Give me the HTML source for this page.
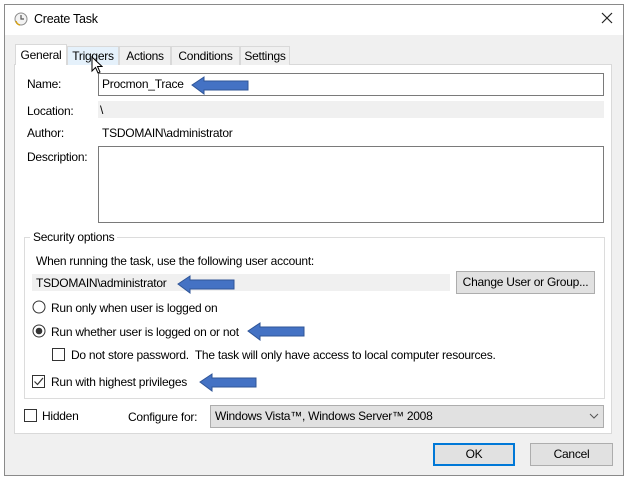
<!DOCTYPE html>
<html><head><meta charset="utf-8"><style>
*{box-sizing:border-box;margin:0;padding:0}
body{width:627px;height:477px;background:#fff;position:relative;overflow:hidden;font-family:"Liberation Sans",sans-serif;font-size:12px;color:#000;letter-spacing:-0.25px}
.a{position:absolute}
.win{left:4px;top:4px;width:620px;height:472px;border:1px solid #8a8a8a;background:#f0f0f0}
.title{left:5px;top:5px;width:618px;height:30px;background:#fff}
.panel{left:14px;top:64px;width:598px;height:370px;background:#fff;border:1px solid #d9d9d9}
.tab{top:46px;height:19px;border:1px solid #d9d9d9;border-bottom:none;background:#f0f0f0;text-align:center;line-height:18px}
.lbl{line-height:14px;white-space:nowrap}
.inp{background:#fff;border:1px solid #7a7a7a}
.gray{background:#f0f0f0}
.btn{background:#e1e1e1;border:1px solid #adadad;text-align:center;line-height:20px}
.cb{width:13px;height:13px;border:1px solid #333;background:#fff}
</style></head><body>
<div class="a" style="left:0;top:0;width:627px;height:477px;background:#fff"></div>
<div class="a win"></div>
<div class="a title"></div>
<svg class="a" style="left:14px;top:12px" width="14" height="14" viewBox="0 0 14 14"><circle cx="7" cy="7" r="6" fill="#f3f3f3" stroke="#8c8c8c"/><path d="M7 3V7H10" stroke="#555" fill="none" stroke-width="1.2"/><path d="M2 9a5 5 0 0 0 4 4" stroke="#d4a017" fill="none" stroke-width="1.5"/></svg>
<div class="a" style="left:34px;top:12px;font-size:12.5px">Create Task</div>
<svg class="a" style="left:601px;top:12px" width="12" height="12"><path d="M1 1L11 11M11 1L1 11" stroke="#222" stroke-width="1.2"/></svg>

<div class="a panel"></div>
<div class="a tab" style="left:15px;top:44px;width:52px;height:21px;background:#fff;line-height:21px;z-index:2">General</div>
<div class="a tab" style="left:67px;width:52px;background:#e5f1fb">Triggers</div>
<div class="a tab" style="left:119px;width:52px">Actions</div>
<div class="a tab" style="left:171px;width:69px">Conditions</div>
<div class="a tab" style="left:240px;width:50px">Settings</div>
<svg class="a" style="left:91px;top:56px;z-index:3" width="12" height="18"><path d="M1 1V15L4.5 11.5L7 17L9 16L6.5 10.5H11Z" fill="#fff" stroke="#000"/></svg>

<div class="a lbl" style="left:27px;top:77px">Name:</div>
<div class="a inp" style="left:98px;top:73px;width:506px;height:23px"></div>
<div class="a lbl" style="left:102px;top:77px">Procmon_Trace</div>
<div class="a lbl" style="left:27px;top:104px">Location:</div>
<div class="a gray" style="left:98px;top:101px;width:506px;height:17px"></div>
<div class="a lbl" style="left:100px;top:103px">\</div>
<div class="a lbl" style="left:27px;top:126px">Author:</div>
<div class="a lbl" style="left:102px;top:126px">TSDOMAIN\administrator</div>
<div class="a lbl" style="left:27px;top:150px">Description:</div>
<div class="a inp" style="left:98px;top:146px;width:506px;height:77px"></div>

<div class="a" style="left:24px;top:237px;width:581px;height:162px;border:1px solid #dcdcdc"></div>
<div class="a lbl" style="left:30px;top:230px;background:#fff;padding:0 3px">Security options</div>
<div class="a lbl" style="left:36px;top:254px">When running the task, use the following user account:</div>
<div class="a gray" style="left:32px;top:274px;width:418px;height:17px"></div>
<div class="a lbl" style="left:36px;top:276px">TSDOMAIN\administrator</div>
<div class="a btn" style="left:456px;top:271px;width:139px;height:23px">Change User or Group...</div>
<svg class="a" style="left:32px;top:300px" width="14" height="14"><circle cx="7" cy="7" r="6" fill="#fff" stroke="#333"/></svg>
<div class="a lbl" style="left:51px;top:301px">Run only when user is logged on</div>
<svg class="a" style="left:32px;top:324px" width="14" height="14"><circle cx="7" cy="7" r="6" fill="#fff" stroke="#333"/><circle cx="7" cy="7" r="3.3" fill="#333"/></svg>
<div class="a lbl" style="left:51px;top:325px">Run whether user is logged on or not</div>
<div class="a cb" style="left:52px;top:348px"></div>
<div class="a lbl" style="left:71px;top:348px">Do not store password.&nbsp; The task will only have access to local computer resources.</div>
<div class="a cb" style="left:32px;top:375px"></div>
<svg class="a" style="left:32px;top:375px" width="13" height="13"><path d="M2.5 6.5L5.5 9.5L11 3" stroke="#333" fill="none" stroke-width="1.2"/></svg>
<div class="a lbl" style="left:51px;top:375px">Run with highest privileges</div>

<div class="a cb" style="left:24px;top:409px"></div>
<div class="a lbl" style="left:42px;top:409px">Hidden</div>
<div class="a lbl" style="left:128px;top:410px">Configure for:</div>
<div class="a btn" style="left:210px;top:405px;width:394px;height:23px;text-align:left;padding-left:4px;line-height:21px">Windows Vista™, Windows Server™ 2008</div>
<svg class="a" style="left:589px;top:413px" width="10" height="6"><path d="M1 1L5 5L9 1" stroke="#555" fill="none"/></svg>

<div class="a btn" style="left:433px;top:443px;width:82px;height:23px;border:2px solid #0078d7;line-height:19px">OK</div>
<div class="a btn" style="left:530px;top:443px;width:83px;height:23px">Cancel</div>

<svg class="a" style="left:0;top:0" width="627" height="477">
<g fill="#4472c4" stroke="#2f5597" stroke-width="1">
<path d="M192 85L204 77V81H248V90H204V94Z"/>
<path d="M178 284L190 276V280H234V289H190V293Z"/>
<path d="M248 331L260 323V327H304V336H260V340Z"/>
<path d="M200 382L212 374V378H256V387H212V391Z"/>
</g></svg>
</body></html>
